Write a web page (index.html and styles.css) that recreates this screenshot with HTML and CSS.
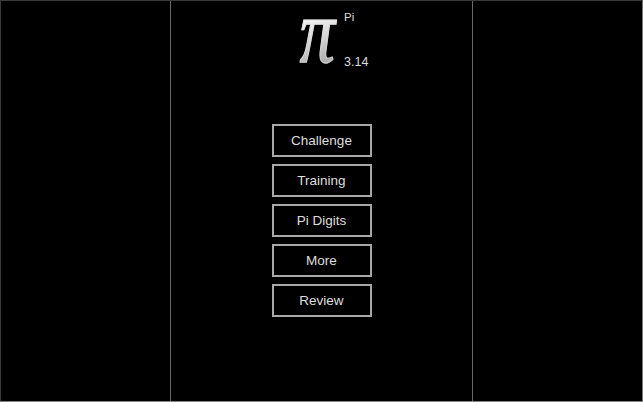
FILE: index.html
```html
<!DOCTYPE html>
<html>
<head>
<meta charset="utf-8">
<link rel="stylesheet" href="styles.css">
</head>
<body>
<div class="frame">
  <div class="column">
    <div class="logo">
      <span class="pi">π</span>
      <div class="logo-side">
        <span class="logo-name">Pi</span>
        <span class="logo-num">3.14</span>
      </div>
    </div>
    <nav class="menu">
      <div class="btn">Challenge</div>
      <div class="btn">Training</div>
      <div class="btn">Pi Digits</div>
      <div class="btn">More</div>
      <div class="btn">Review</div>
    </nav>
  </div>
</div>
</body>
</html>
```

FILE: styles.css
```css
html, body {
  margin: 0;
  padding: 0;
  background: #000;
}
body {
  font-family: "Liberation Sans", Arial, sans-serif;
}
.frame {
  box-sizing: border-box;
  width: 643px;
  height: 402px;
  border: 1px solid #3a3a3a;
  border-right-color: #777;
  border-bottom-color: #888;
  display: flex;
  justify-content: center;
  background: #000;
}
.column {
  box-sizing: border-box;
  width: 303px;
  height: 100%;
  border-left: 1px solid #6a6a6a;
  border-right: 1px solid #6a6a6a;
  display: flex;
  flex-direction: column;
  align-items: center;
}
.logo {
  width: 100%;
  height: 123px;
  display: flex;
  align-items: flex-start;
  padding-left: 124px;
  box-sizing: border-box;
}
.pi {
  display: block;
  width: 52px;
  padding: 0 6px;
  margin-right: -15px;
  font-family: "Liberation Serif", "Times New Roman", serif;
  font-style: italic;
  font-size: 90px;
  line-height: 90px;
  height: 90px;
  margin-top: -14px;
  transform: scaleX(0.78);
  transform-origin: 0 0;
  -webkit-text-stroke: 1.3px rgba(225, 225, 225, 0.55);
  background: linear-gradient(165deg, #ffffff 25%, #d8d8d8 55%, #8a8a8a 100%);
  -webkit-background-clip: text;
  background-clip: text;
  color: transparent;
}
.logo-side {
  display: flex;
  flex-direction: column;
  justify-content: space-between;
  height: 58px;
  margin-top: 10px;
  color: #dcdcdc;
}
.logo-name {
  font-size: 11.5px;
}
.logo-num {
  font-size: 12.5px;
}
.menu {
  display: flex;
  flex-direction: column;
  gap: 7px;
}
.btn {
  box-sizing: border-box;
  width: 100px;
  height: 33px;
  border: 2px solid #a8a8a8;
  display: flex;
  align-items: center;
  justify-content: center;
  color: #dedede;
  font-size: 13.5px;
}
```
